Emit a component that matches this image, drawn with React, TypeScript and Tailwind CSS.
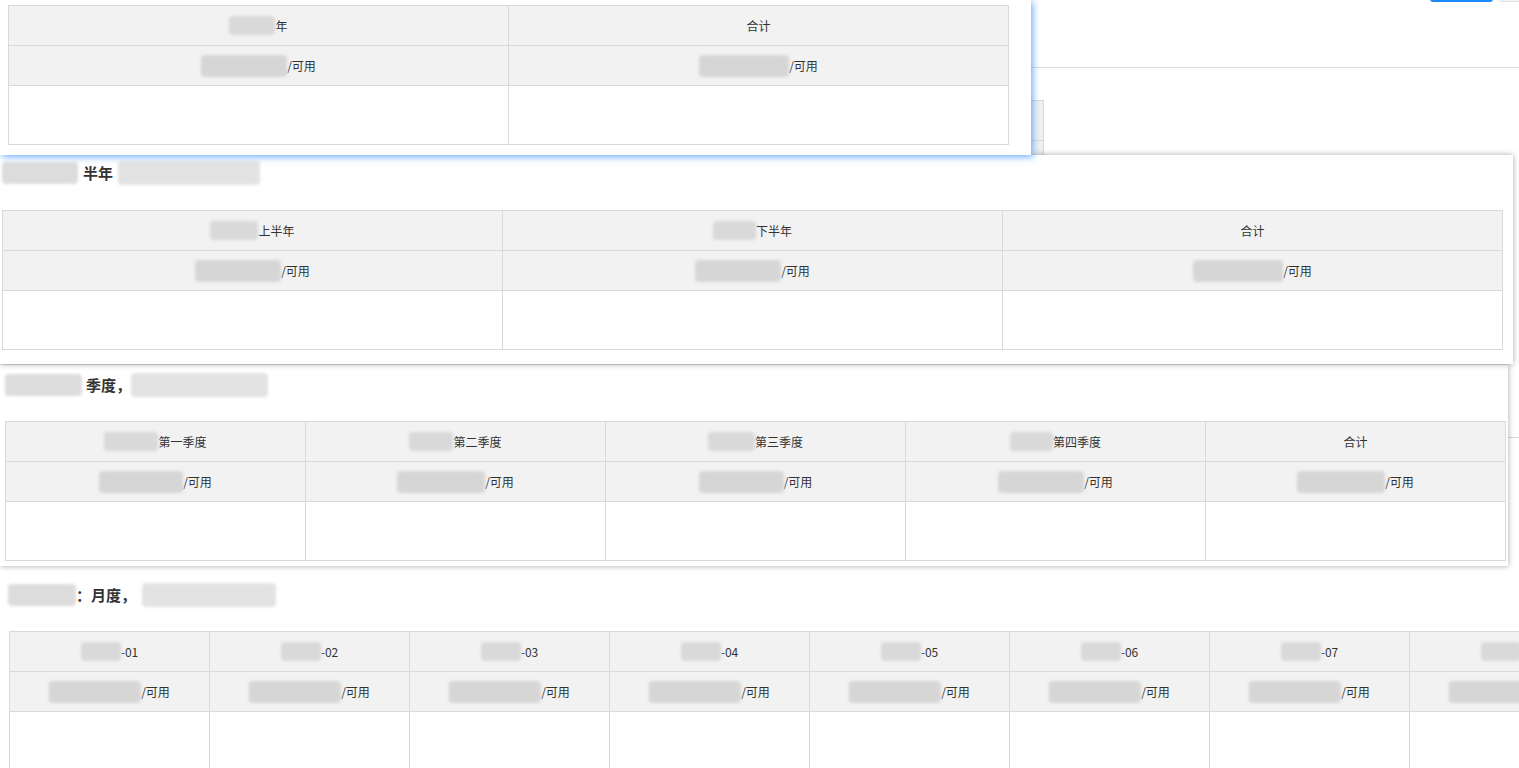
import type { ReactNode } from "react";

type Col = { top: ReactNode; sub: ReactNode };

const Blur = ({ className }: { className: string }) => (
  <span className={`inline-block shrink-0 rounded-sm blur-[1.5px] ${className}`} />
);

const Head = ({ w, text }: { w: string; text: string }) => (
  <div className="flex items-center justify-center">
    <Blur className={`h-[19px] bg-[#d9d9d9] ${w}`} />
    <span>{text}</span>
  </div>
);

const Sub = ({ w }: { w: string }) => (
  <div className="flex items-center justify-center">
    <Blur className={`h-[22px] bg-[#d6d6d6] ${w}`} />
    <span>/可用</span>
  </div>
);

const total = (w: string): Col => ({ top: <span>合计</span>, sub: <Sub w={w} /> });

const DataTable = ({ cols, colClass }: { cols: Col[]; colClass: string }) => (
  <table className="table-fixed border-collapse text-[12px] text-[#333]">
    <tbody>
      <tr className="h-[40px] bg-[#f2f2f2]">
        {cols.map((c, i) => (
          <td key={i} className={`${colClass} border border-[#d9d9d9] text-center`}>
            {c.top}
          </td>
        ))}
      </tr>
      <tr className="h-[40px] bg-[#f2f2f2]">
        {cols.map((c, i) => (
          <td key={i} className={`${colClass} border border-[#d9d9d9] text-center`}>
            {c.sub}
          </td>
        ))}
      </tr>
      <tr className="h-[59px] bg-white">
        {cols.map((_, i) => (
          <td key={i} className={`${colClass} border border-[#d9d9d9]`} />
        ))}
      </tr>
    </tbody>
  </table>
);

const Title = ({ a, label, b, gap }: { a: string; label: string; b: string; gap: string }) => (
  <div className="flex items-center text-[15px] font-bold text-[#333]">
    <Blur className={`h-[22px] bg-[#dcdcdc] ${a}`} />
    <span className={gap}>{label}</span>
    <Blur className={`h-[24px] bg-[#e3e3e3] ${b}`} />
  </div>
);

const yearCols: Col[] = [
  { top: <Head w="w-[46px]" text="年" />, sub: <Sub w="w-[86px]" /> },
  total("w-[90px]"),
];

const halfCols: Col[] = [
  { top: <Head w="w-[48px]" text="上半年" />, sub: <Sub w="w-[86px]" /> },
  { top: <Head w="w-[43px]" text="下半年" />, sub: <Sub w="w-[86px]" /> },
  total("w-[90px]"),
];

const quarterCols: Col[] = [
  { top: <Head w="w-[54px]" text="第一季度" />, sub: <Sub w="w-[84px]" /> },
  { top: <Head w="w-[44px]" text="第二季度" />, sub: <Sub w="w-[88px]" /> },
  { top: <Head w="w-[47px]" text="第三季度" />, sub: <Sub w="w-[85px]" /> },
  { top: <Head w="w-[43px]" text="第四季度" />, sub: <Sub w="w-[86px]" /> },
  total("w-[88px]"),
];

// only the months that reach into the window
const months = ["01", "02", "03", "04", "05", "06", "07", "08"];
const monthCols: Col[] = months.map((m) => ({
  top: <Head w="w-[40px]" text={`-${m}`} />,
  sub: <Sub w="w-[92px]" />,
}));

export default function App() {
  return (
    <div
      className="relative h-[768px] w-[1519px] overflow-hidden bg-white"
      style={{ fontFamily: '"Microsoft YaHei", "Noto Sans CJK SC", "Noto Sans", sans-serif' }}
    >
      {/* page behind the dragged cards */}
      <div className="absolute right-[26px] top-[-4px] h-[6px] w-[63px] rounded-b-[3px] bg-[#1989fa]" />
      <div className="absolute right-[-6px] top-[-4px] h-[6px] w-[26px] rounded-b-[3px] border border-[#dcdfe6] bg-[#f4f4f5]" />
      <div className="absolute left-0 right-0 top-[67px] border-t border-[#dcdcdc]" />
      <div className="absolute left-0 top-[100px] h-[80px] w-[1044px] border border-[#d9d9d9] bg-[#f0f0f0]">
        <div className="h-[40px] border-b border-[#d9d9d9]" />
      </div>
      <div className="absolute left-0 right-0 top-[437px] border-t border-[#d9d9d9]" />

      <div className="relative flex flex-col items-start">
        {/* year card, being dragged */}
        <div className="relative z-30 h-[155px] w-[1031px] bg-white pl-[8px] pt-[5px] shadow-[2px_2px_7px_rgba(64,150,255,0.75)]">
          <DataTable cols={yearCols} colClass="w-[500px]" />
        </div>

        {/* half year */}
        <div className="relative z-20 h-[209px] w-[1513px] bg-white pl-[2px] shadow-[0_0_6px_rgba(0,0,0,0.35)]">
          <div className="flex h-[55px] items-start pt-[6px]">
            <Title a="w-[76px]" label="半年" b="w-[142px]" gap="px-[5px]" />
          </div>
          <DataTable cols={halfCols} colClass="w-[500px]" />
        </div>

        {/* quarter */}
        <div className="relative z-10 mt-px h-[201px] w-[1508px] bg-white pl-[5px] shadow-[0_0_6px_rgba(0,0,0,0.35)]">
          <div className="flex h-[56px] items-start pt-[8px]">
            <Title a="w-[77px]" label="季度，" b="w-[137px]" gap="pl-[4px]" />
          </div>
          <DataTable cols={quarterCols} colClass="w-[300px]" />
        </div>

        {/* month, page content */}
        <div className="w-max pl-[9px]">
          <div className="-ml-px flex h-[65px] items-start pt-[17px]">
            <Title a="w-[68px]" label="：月度，" b="w-[134px]" gap="pr-[6px]" />
          </div>
          <DataTable cols={monthCols} colClass="w-[200px]" />
        </div>
      </div>
    </div>
  );
}
